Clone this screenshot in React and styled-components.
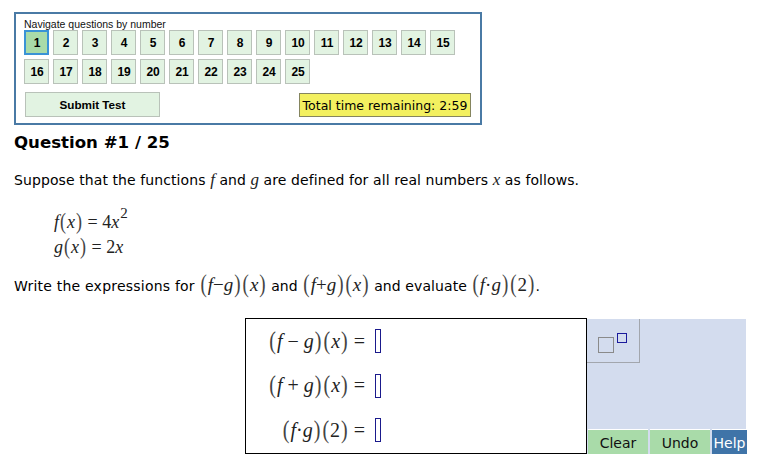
import React from 'react';
import styled, { createGlobalStyle } from 'styled-components';

const GlobalStyle = createGlobalStyle`
  html, body {
    margin: 0;
    padding: 0;
    background: #fff;
    color: #000;
  }
`;

const Page = styled.div`
  width: 777px;
  height: 455px;
  box-sizing: border-box;
  padding: 12px 0 0 14px;
  overflow: hidden;
  font-family: "DejaVu Sans", Verdana, sans-serif;
  font-size: 13px;
`;

const NavPanel = styled.div`
  width: 468px;
  height: 113px;
  box-sizing: border-box;
  border: 2px solid #4a7aa5;
  padding: 4px 9px 0 8px;
`;

const NavLabel = styled.div`
  font-family: "Liberation Sans", Arial, sans-serif;
  font-size: 10.5px;
  line-height: 12px;
  color: #111;
`;

const NumberGrid = styled.div`
  display: grid;
  grid-template-columns: repeat(15, 25px);
  grid-auto-rows: 25px;
  gap: 4px;
`;

const NumberButton = styled.div`
  box-sizing: border-box;
  display: flex;
  align-items: center;
  justify-content: center;
  padding-left: 1px;
  font-family: "Liberation Sans", Arial, sans-serif;
  font-size: 12px;
  letter-spacing: -0.2px;
  font-weight: bold;
  background: ${(p) => (p.$active ? '#a9dba9' : '#e2f3e2')};
  border: ${(p) => (p.$active ? '2px solid #3a93d6' : '1px solid #b9c2b9')};
`;

const NavFooter = styled.div`
  display: flex;
  justify-content: space-between;
  align-items: flex-end;
  margin-top: 8px;
`;

const SubmitButton = styled.div`
  box-sizing: border-box;
  width: 135px;
  height: 25px;
  margin-left: 1px;
  display: flex;
  align-items: center;
  justify-content: center;
  font-family: "Liberation Sans", Arial, sans-serif;
  font-size: 11.7px;
  font-weight: bold;
  background: #e2f3e2;
  border: 1px solid #b9c2b9;
`;

const Timer = styled.div`
  box-sizing: border-box;
  width: 172px;
  height: 24px;
  padding-top: 1px;
  display: flex;
  align-items: center;
  justify-content: center;
  white-space: nowrap;
  font-size: 12.5px;
  background: #f3f060;
  border: 1px solid #85855f;
`;

const Title = styled.h2`
  margin: 8px 0 0;
  font-size: 16.6px;
  line-height: 20px;
  font-weight: bold;
`;

const Paragraph = styled.p`
  margin: ${(p) => p.$top}px 0 0;
  font-size: 14px;
  letter-spacing: 0.09px;
  line-height: 20px;
  white-space: nowrap;
`;

const Lead = styled.span`
  letter-spacing: 0.22px;
`;

const Math = styled.span`
  font-family: "Liberation Serif", "Times New Roman", serif;
  font-size: ${(p) => p.$size || 17}px;
  letter-spacing: 0;
  color: #222;
  white-space: nowrap;
`;

const Var = styled.i`
  font-family: "Liberation Serif", "Times New Roman", serif;
`;

const Paren = styled.span`
  display: inline-block;
  margin: 0 1px;
  font-family: "Liberation Serif", "Times New Roman", serif;
  line-height: 1;
  color: #444;
  transform: scaleY(1.3);
  transform-origin: center 60%;
`;

const Equations = styled.div`
  margin: 20px 0 0 40px;
  font-family: "Liberation Serif", "Times New Roman", serif;
  font-size: 18px;
  line-height: 25px;
  color: #222;
`;

const Sup = styled.sup`
  margin-left: 1px;
  font-size: 15px;
  line-height: 0;
  vertical-align: 10px;
`;

const AnswerRow = styled.div`
  display: flex;
  margin: 22px 0 0 231px;
  width: 502px;
  height: 136px;
`;

const AnswerBox = styled.div`
  box-sizing: border-box;
  width: 342px;
  height: 136px;
  border: 1px solid #000;
`;

const AnswerLine = styled.div`
  display: flex;
  justify-content: flex-end;
  align-items: center;
  width: 135px;
  height: 44.5px;
  gap: 10px;
  font-family: "Liberation Serif", "Times New Roman", serif;
  font-size: 20px;
  color: #222;
`;

const Blank = styled.span`
  flex: none;
  box-sizing: border-box;
  width: 6px;
  height: 24px;
  border: 1px solid #1a1a8c;
`;

const Toolbox = styled.div`
  width: 159px;
  margin-top: 1px;
  display: flex;
  flex-direction: column;
  justify-content: space-between;
  background: #d3dcee;
`;

const ToolTile = styled.div`
  box-sizing: border-box;
  width: 53px;
  height: 44px;
  border-right: 1px solid #a2a6ad;
  border-bottom: 1px solid #a2a6ad;
  display: flex;
  align-items: center;
  justify-content: center;
`;

const ToolButtons = styled.div`
  display: flex;
  gap: 2px;
  padding-left: 1px;
  margin-right: -1px;
`;

const ToolButton = styled.div`
  box-sizing: border-box;
  width: ${(p) => p.$width}px;
  height: 25px;
  padding-top: 2px;
  display: flex;
  align-items: center;
  justify-content: center;
  font-size: 14px;
  background: ${(p) => (p.$help ? '#3f74a8' : '#a9dba9')};
  color: ${(p) => (p.$help ? '#fff' : '#111')};
  border-top: 1px solid #fff;
`;

const Exponent = () => (
  <svg width="32" height="24" viewBox="0 0 32 24">
    <rect x="1.5" y="8.5" width="15" height="15" fill="none" stroke="#8a8a8a" />
    <rect x="20.5" y="4.5" width="9" height="9" fill="none" stroke="#1a1a9c" />
  </svg>
);

const numbers = Array.from({ length: 25 }, (_, i) => i + 1);

export default function App() {
  return (
    <Page>
      <GlobalStyle />
      <NavPanel>
        <NavLabel>Navigate questions by number</NavLabel>
        <NumberGrid>
          {numbers.map((n) => (
            <NumberButton key={n} $active={n === 1}>{n}</NumberButton>
          ))}
        </NumberGrid>
        <NavFooter>
          <SubmitButton>Submit Test</SubmitButton>
          <Timer>Total time remaining: 2:59</Timer>
        </NavFooter>
      </NavPanel>

      <Title>Question #1 / 25</Title>

      <Paragraph $top={17}>
        Suppose that the functions <Math><Var>f</Var></Math> and <Math><Var>g</Var></Math> are
        defined for all real numbers <Math><Var>x</Var></Math> as follows.
      </Paragraph>

      <Equations>
        <div><Var>f</Var><Paren>(</Paren><Var>x</Var><Paren>)</Paren> = 4<Var>x</Var><Sup>2</Sup></div>
        <div><Var>g</Var><Paren>(</Paren><Var>x</Var><Paren>)</Paren> = 2<Var>x</Var></div>
      </Equations>

      <Paragraph $top={15}>
        <Lead>Write the expressions for</Lead>{' '}
        <Math $size={19}><Paren>(</Paren><Var>f</Var>−<Var>g</Var><Paren>)</Paren><Paren>(</Paren><Var>x</Var><Paren>)</Paren></Math> and{' '}
        <Math $size={19}><Paren>(</Paren><Var>f</Var>+<Var>g</Var><Paren>)</Paren><Paren>(</Paren><Var>x</Var><Paren>)</Paren></Math> and evaluate{' '}
        <Math $size={19}><Paren>(</Paren><Var>f</Var>·<Var>g</Var><Paren>)</Paren><Paren>(</Paren>2<Paren>)</Paren></Math>.
      </Paragraph>

      <AnswerRow>
        <AnswerBox>
          <AnswerLine>
            <span><Paren>(</Paren><Var>f</Var> − <Var>g</Var><Paren>)</Paren><Paren>(</Paren><Var>x</Var><Paren>)</Paren> =</span>
            <Blank />
          </AnswerLine>
          <AnswerLine>
            <span><Paren>(</Paren><Var>f</Var> + <Var>g</Var><Paren>)</Paren><Paren>(</Paren><Var>x</Var><Paren>)</Paren> =</span>
            <Blank />
          </AnswerLine>
          <AnswerLine>
            <span><Paren>(</Paren><Var>f</Var>·<Var>g</Var><Paren>)</Paren><Paren>(</Paren>2<Paren>)</Paren> =</span>
            <Blank />
          </AnswerLine>
        </AnswerBox>
        <Toolbox>
          <ToolTile><Exponent /></ToolTile>
          <ToolButtons>
            <ToolButton $width={60}>Clear</ToolButton>
            <ToolButton $width={60}>Undo</ToolButton>
            <ToolButton $width={35} $help>Help</ToolButton>
          </ToolButtons>
        </Toolbox>
      </AnswerRow>
    </Page>
  );
}
